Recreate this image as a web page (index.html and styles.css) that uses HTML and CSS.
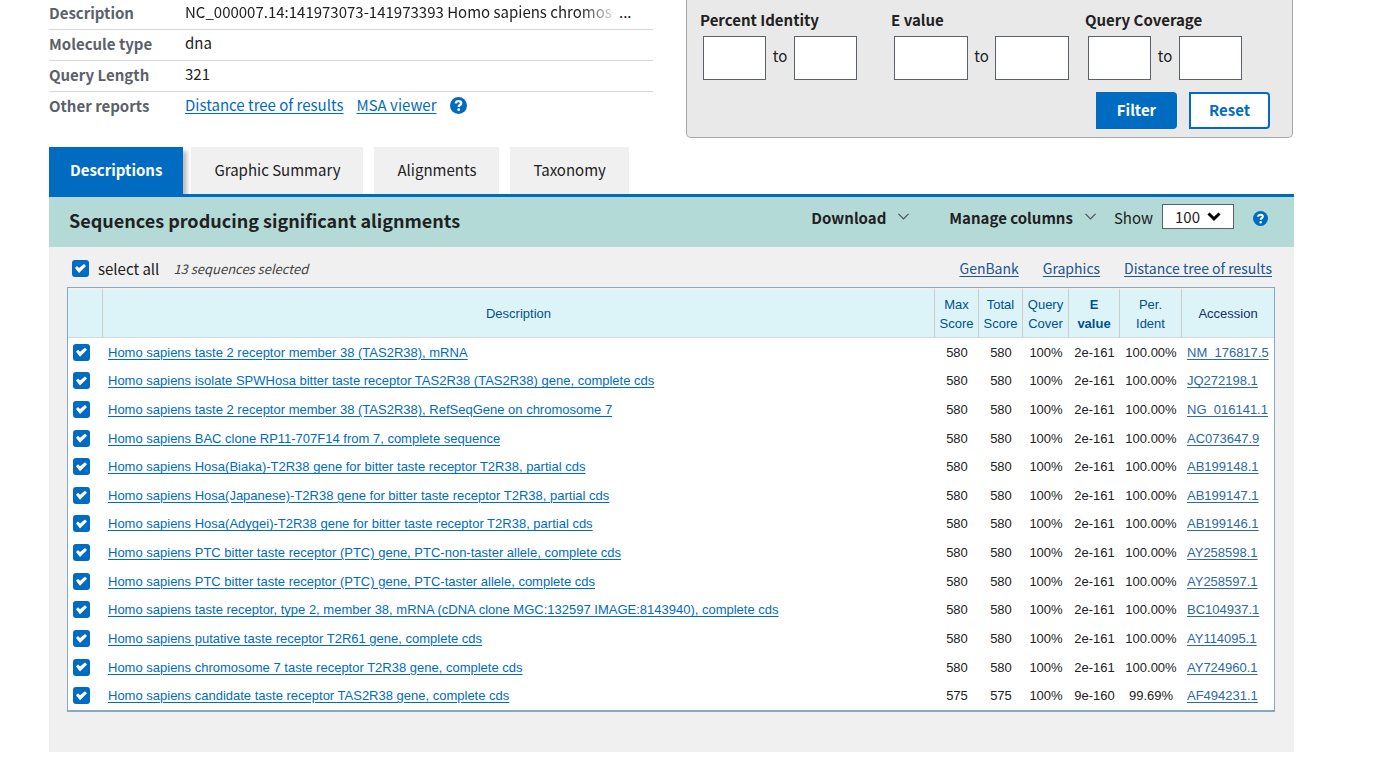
FILE: index.html
```
<!DOCTYPE html>
<html lang="en">
<head>
    <meta charset="utf-8">
    <title>BLAST Results</title>
    <link rel="stylesheet" href="styles.css">
</head>
<body>
    <div class="page">
        <div class="top">
            <dl class="summary">
                <div class="row first">
                    <dt>Description</dt>
                    <dd class="descr"><span class="fade">NC_000007.14:141973073-141973393 Homo sapiens chromos</span><span class="more">...</span></dd>
                </div>
                <div class="row">
                    <dt>Molecule type</dt>
                    <dd>dna</dd>
                </div>
                <div class="row">
                    <dt>Query Length</dt>
                    <dd>321</dd>
                </div>
                <div class="row last">
                    <dt>Other reports</dt>
                    <dd class="reports">
                        <a href="#">Distance tree of results</a>
                        <a href="#">MSA viewer</a>
                        <button type="button" class="help" aria-label="Help"><svg width="17" height="17" viewBox="0 0 16 16"><circle cx="8" cy="8" r="8" fill="#006cc1"/><path d="M5.5 6.1C5.5 4.600 6.600 3.900 8 3.900s2.500.8 2.500 2c0 1.600-2.300 1.700-2.300 3.400" fill="none" stroke="#fff" stroke-width="2.200"/><circle cx="8.200" cy="11.900" r="1.300" fill="#fff"/></svg></button>
                    </dd>
                </div>
            </dl>
            <form class="filter">
                <div class="groups">
                    <fieldset>
                        <legend>Percent Identity</legend>
                        <div class="range">
                            <input type="text" aria-label="Percent identity from">
                            <span>to</span>
                            <input type="text" aria-label="Percent identity to">
                        </div>
                    </fieldset>
                    <fieldset>
                        <legend>E value</legend>
                        <div class="range wide">
                            <input type="text" aria-label="E value from">
                            <span>to</span>
                            <input type="text" aria-label="E value to">
                        </div>
                    </fieldset>
                    <fieldset>
                        <legend>Query Coverage</legend>
                        <div class="range">
                            <input type="text" aria-label="Query coverage from">
                            <span>to</span>
                            <input type="text" aria-label="Query coverage to">
                        </div>
                    </fieldset>
                </div>
                <div class="actions">
                    <button type="button" class="btn primary">Filter</button>
                    <button type="reset" class="btn">Reset</button>
                </div>
            </form>
        </div>

        <nav class="tabs">
            <a href="#" class="on">Descriptions</a>
            <a href="#">Graphic Summary</a>
            <a href="#">Alignments</a>
            <a href="#">Taxonomy</a>
        </nav>

        <div class="results">
            <div class="bar">
                <h2>Sequences producing significant alignments</h2>
                <button type="button" class="menu">Download <svg width="11" height="7" viewBox="0 0 11 7"><path d="M.5.8l5 5 5-5" fill="none" stroke="#4a505a" stroke-width="1.200"/></svg></button>
                <button type="button" class="menu">Manage columns <svg width="11" height="7" viewBox="0 0 11 7"><path d="M.5.8l5 5 5-5" fill="none" stroke="#4a505a" stroke-width="1.200"/></svg></button>
                <label class="show" for="num">Show</label>
                <div class="select">
                    <select id="num">
                        <option>10</option>
                        <option>50</option>
                        <option selected>100</option>
                    </select>
                    <svg width="14" height="9" viewBox="0 0 14 9"><path d="M1.500 1.500L7 6.800l5.500-5.300" fill="none" stroke="#000" stroke-width="3"/></svg>
                </div>
                <button type="button" class="help" aria-label="Help"><svg width="15" height="15" viewBox="0 0 16 16"><circle cx="8" cy="8" r="8" fill="#006cc1"/><path d="M5.500 6.100C5.500 4.600 6.600 3.900 8 3.900s2.500.8 2.500 2c0 1.600-2.300 1.700-2.300 3.400" fill="none" stroke="#fff" stroke-width="2.200"/><circle cx="8.200" cy="11.900" r="1.300" fill="#fff"/></svg></button>
            </div>

            <div class="tools">
                <input type="checkbox" id="all" checked>
                <label for="all">select all</label>
                <em>13 sequences selected</em>
                <div class="links">
                    <a href="#">GenBank</a>
                    <a href="#">Graphics</a>
                    <a href="#">Distance tree of results</a>
                </div>
            </div>

            <table class="hits">
                <colgroup>
                    <col class="c-check"><col><col class="c-score"><col class="c-score"><col class="c-cover"><col class="c-eval"><col class="c-ident"><col class="c-acc">
                </colgroup>
                <thead>
                    <tr>
                        <th></th>
                        <th><a href="#">Description</a></th>
                        <th><a href="#">Max Score</a></th>
                        <th><a href="#">Total Score</a></th>
                        <th><a href="#">Query Cover</a></th>
                        <th><a href="#" class="sorted">E<br>value</a></th>
                        <th><a href="#">Per.<br>Ident</a></th>
                        <th class="acc">Accession</th>
                    </tr>
                </thead>
                <tbody>
                    <tr><td><input type="checkbox" aria-label="Select NM_176817.5" checked></td><td><a href="#">Homo sapiens taste 2 receptor member 38 (TAS2R38), mRNA</a></td><td>580</td><td>580</td><td>100%</td><td>2e-161</td><td>100.00%</td><td><a href="#">NM_176817.5</a></td></tr>
                    <tr><td><input type="checkbox" aria-label="Select JQ272198.1" checked></td><td><a href="#">Homo sapiens isolate SPWHosa bitter taste receptor TAS2R38 (TAS2R38) gene, complete cds</a></td><td>580</td><td>580</td><td>100%</td><td>2e-161</td><td>100.00%</td><td><a href="#">JQ272198.1</a></td></tr>
                    <tr><td><input type="checkbox" aria-label="Select NG_016141.1" checked></td><td><a href="#">Homo sapiens taste 2 receptor member 38 (TAS2R38), RefSeqGene on chromosome 7</a></td><td>580</td><td>580</td><td>100%</td><td>2e-161</td><td>100.00%</td><td><a href="#">NG_016141.1</a></td></tr>
                    <tr><td><input type="checkbox" aria-label="Select AC073647.9" checked></td><td><a href="#">Homo sapiens BAC clone RP11-707F14 from 7, complete sequence</a></td><td>580</td><td>580</td><td>100%</td><td>2e-161</td><td>100.00%</td><td><a href="#">AC073647.9</a></td></tr>
                    <tr><td><input type="checkbox" aria-label="Select AB199148.1" checked></td><td><a href="#">Homo sapiens Hosa(Biaka)-T2R38 gene for bitter taste receptor T2R38, partial cds</a></td><td>580</td><td>580</td><td>100%</td><td>2e-161</td><td>100.00%</td><td><a href="#">AB199148.1</a></td></tr>
                    <tr><td><input type="checkbox" aria-label="Select AB199147.1" checked></td><td><a href="#">Homo sapiens Hosa(Japanese)-T2R38 gene for bitter taste receptor T2R38, partial cds</a></td><td>580</td><td>580</td><td>100%</td><td>2e-161</td><td>100.00%</td><td><a href="#">AB199147.1</a></td></tr>
                    <tr><td><input type="checkbox" aria-label="Select AB199146.1" checked></td><td><a href="#">Homo sapiens Hosa(Adygei)-T2R38 gene for bitter taste receptor T2R38, partial cds</a></td><td>580</td><td>580</td><td>100%</td><td>2e-161</td><td>100.00%</td><td><a href="#">AB199146.1</a></td></tr>
                    <tr><td><input type="checkbox" aria-label="Select AY258598.1" checked></td><td><a href="#">Homo sapiens PTC bitter taste receptor (PTC) gene, PTC-non-taster allele, complete cds</a></td><td>580</td><td>580</td><td>100%</td><td>2e-161</td><td>100.00%</td><td><a href="#">AY258598.1</a></td></tr>
                    <tr><td><input type="checkbox" aria-label="Select AY258597.1" checked></td><td><a href="#">Homo sapiens PTC bitter taste receptor (PTC) gene, PTC-taster allele, complete cds</a></td><td>580</td><td>580</td><td>100%</td><td>2e-161</td><td>100.00%</td><td><a href="#">AY258597.1</a></td></tr>
                    <tr><td><input type="checkbox" aria-label="Select BC104937.1" checked></td><td><a href="#">Homo sapiens taste receptor, type 2, member 38, mRNA (cDNA clone MGC:132597 IMAGE:8143940), complete cds</a></td><td>580</td><td>580</td><td>100%</td><td>2e-161</td><td>100.00%</td><td><a href="#">BC104937.1</a></td></tr>
                    <tr><td><input type="checkbox" aria-label="Select AY114095.1" checked></td><td><a href="#">Homo sapiens putative taste receptor T2R61 gene, complete cds</a></td><td>580</td><td>580</td><td>100%</td><td>2e-161</td><td>100.00%</td><td><a href="#">AY114095.1</a></td></tr>
                    <tr><td><input type="checkbox" aria-label="Select AY724960.1" checked></td><td><a href="#">Homo sapiens chromosome 7 taste receptor T2R38 gene, complete cds</a></td><td>580</td><td>580</td><td>100%</td><td>2e-161</td><td>100.00%</td><td><a href="#">AY724960.1</a></td></tr>
                    <tr><td><input type="checkbox" aria-label="Select AF494231.1" checked></td><td><a href="#">Homo sapiens candidate taste receptor TAS2R38 gene, complete cds</a></td><td>575</td><td>575</td><td>100%</td><td>9e-160</td><td>99.69%</td><td><a href="#">AF494231.1</a></td></tr>
                </tbody>
            </table>
        </div>
    </div>
</body>
</html>
```

FILE: styles.css
```
*{
    box-sizing: border-box;
    margin: 0;
    padding: 0;
}
body{
    font-family: "Noto Sans CJK SC", "Source Sans Pro", sans-serif;
    font-size: 15px;
    line-height: 24px;
    color: #212121;
    background: #fff;
}
a{
    color: #006cc1;
    text-underline-offset: 2px;
}
button{
    font: inherit;
    color: inherit;
    border: 0;
    background: none;
    cursor: pointer;
}
svg{
    display: block;
}
.page{
    padding: 0 80px 0 49px;
}

/* query summary */
.top{
    display: flex;
    justify-content: space-between;
    padding-right: 1px;
}
.summary{
    width: 604px;
}
.row{
    display: flex;
    height: 31px;
    padding-top: 1px;
    border-bottom: 1px solid #d6d7d9;
}
.row.first{
    height: 30px;
    padding-top: 0;
}
.row.last{
    border-bottom: 0;
}
.row dt{
    width: 136px;
    padding-top: 1px;
    font-weight: bold;
    color: #5b616b;
}
.descr{
    display: flex;
    gap: 3px;
}
.fade{
    width: 431px;
    white-space: nowrap;
    mask-image: linear-gradient(to right, #000 395px, transparent 434px);
}
.reports{
    display: flex;
    align-items: center;
    gap: 13px;
    height: 24px;
}

/* filter box */
.filter{
    width: 607px;
    padding: 8px 22px 8px 13px;
    background: #e9e9e9;
    border: 1px solid #a6a6a6;
    border-top: 0;
    border-radius: 0 0 5px 5px;
}
.groups{
    display: grid;
    grid-template-columns: 191px 194px auto;
}
fieldset{
    border: 0;
}
legend{
    font-weight: bold;
}
.range{
    display: flex;
    padding: 4px 0 0 3px;
}
.range input{
    width: 63px;
    height: 44px;
    border: 1px solid #5b616b;
    background: #fff;
}
.range.wide input{
    width: 74px;
}
.range span{
    width: 28px;
    line-height: 40px;
    text-align: center;
}
.range.wide span{
    width: 27px;
}
.actions{
    display: flex;
    justify-content: flex-end;
    gap: 12px;
    padding-top: 12px;
}
.btn{
    width: 81px;
    height: 37px;
    padding-bottom: 2px;
    font-weight: bold;
    color: #006cc1;
    background: #fff;
    border: 2px solid #006cc1;
    border-radius: 0 4px 4px 0;
}
.btn.primary{
    color: #fff;
    background: #006cc1;
}

/* tabs */
.tabs{
    display: flex;
    gap: 11px;
    margin-top: 9px;
    border-bottom: 3px solid #006cc1;
}
.tabs a{
    padding: 0 23px 2px;
    line-height: 45px;
    color: #212121;
    text-decoration: none;
    background: #f0f0f0;
}
.tabs .on{
    margin-right: -3px;
    padding: 0 21px 2px;
    font-weight: bold;
    color: #fff;
    background: #006cc1;
    box-shadow: 4px 4px 4px rgba(0,0,0,.25);
    clip-path: inset(0 -8px 0 0);
}

/* results */
.results{
    padding-bottom: 40px;
    background: #f0f0f0;
}
.bar{
    display: flex;
    align-items: center;
    height: 50px;
    padding: 0 26px 0 20px;
    background: #b4dad7;
}
.bar h2{
    flex: 1;
    padding-bottom: 4px;
    font-size: 18px;
}
.menu{
    display: flex;
    align-items: center;
    gap: 12px;
    margin: 0 40px 8px 0;
    font-weight: bold;
}
.menu + .menu{
    margin-right: 18px;
}
.menu svg{
    margin-bottom: 4px;
}
.show{
    padding: 0 9px 8px 0;
}
.select{
    position: relative;
    margin: 0 19px 11px 0;
}
.select select{
    display: block;
    width: 72px;
    height: 25px;
    padding-left: 12px;
    font: inherit;
    color: inherit;
    background: #fff;
    border: 1px solid #5b616b;
    border-radius: 0;
    appearance: none;
}
.select svg{
    position: absolute;
    top: 8px;
    right: 13px;
    pointer-events: none;
}
.bar .help{
    margin-bottom: 8px;
}
.tools{
    display: flex;
    align-items: center;
    height: 40px;
    padding: 3px 22px 0 23px;
}
.tools label{
    padding: 0 14px 0 9px;
}
.tools em{
    font-size: 13px;
    color: #444;
}
.links{
    display: flex;
    gap: 24px;
    margin-left: auto;
    padding-bottom: 2px;
    font-size: 14px;
}
.links a{
    color: #205493;
}
input[type=checkbox]{
    display: block;
    width: 17px;
    height: 17px;
    border-radius: 3px;
    background: #fff;
    appearance: none;
}
input[type=checkbox]:checked{
    background: #006cc1;
}
input[type=checkbox]:checked::before{
    content: "";
    display: block;
    width: 17px;
    height: 17px;
    background: #fff;
    clip-path: polygon(3px 8px, 5px 6px, 7px 8px, 12px 4px, 14px 6px, 7px 13px);
}
.hits{
    width: calc(100% - 37px);
    height: 425px;
    margin-left: 18px;
    table-layout: fixed;
    border-collapse: separate;
    border-spacing: 0;
    border: 1px solid #86a9c6;
    border-bottom-width: 2px;
    background: #fff;
    font: 13px/19px "Liberation Sans", Arial, sans-serif;
}
.c-check{
    width: 35px;
}
.c-score{
    width: 44px;
}
.c-cover{
    width: 46px;
}
.c-eval{
    width: 51px;
}
.c-ident{
    width: 62px;
}
.c-acc{
    width: 92px;
}
.hits th{
    height: 50px;
    border-top: 2px solid #f0f0f0;
    border-right: 1px solid #ccc;
    border-bottom: 1px solid #d0dde0;
    background: #dcf4f8;
    font-weight: normal;
}
.hits th a{
    color: #00508f;
    text-decoration: none;
}
.hits th .sorted{
    font-weight: bold;
}
.hits th.acc{
    border-right: 0;
    color: #112e6b;
}
.hits td{
    text-align: center;
}
.hits td:first-child,
.hits td:nth-child(2),
.hits td:last-child{
    padding-left: 5px;
    text-align: left;
}
.hits td:last-child a{
    color: #2c69a5;
}
```
